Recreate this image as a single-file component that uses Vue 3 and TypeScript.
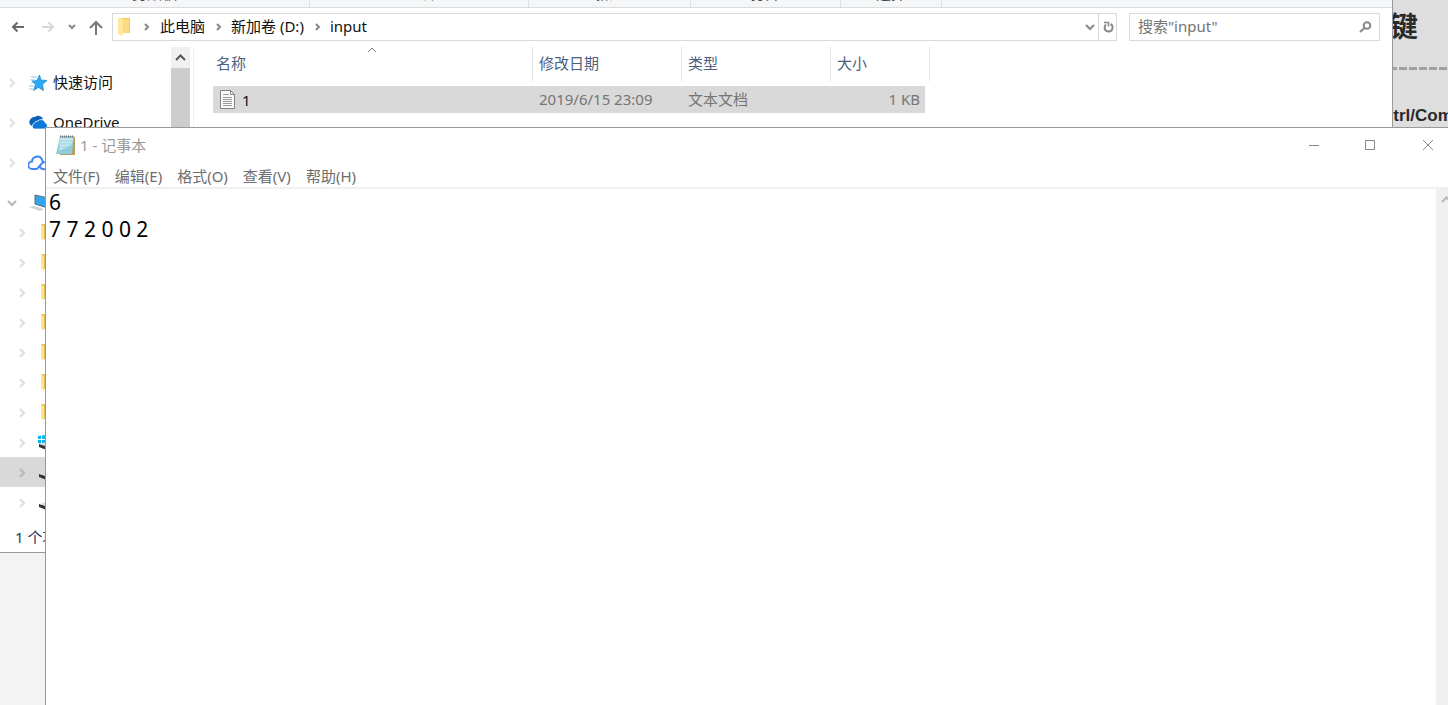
<script setup lang="ts">
interface NavItem {
  label: string
  icon: string
  sub?: boolean
  open?: boolean
  selected?: boolean
}

const groups = ['剪贴板', '组织', '新建', '打开', '选择', '']
const crumbs = ['此电脑', '新加卷 (D:)', 'input']
const nav: NavItem[] = [
  { label: '快速访问', icon: 'star' },
  { label: 'OneDrive', icon: 'onedrive' },
  { label: '', icon: 'cloud' },
  { label: '', icon: 'pc', open: true },
  { label: '', icon: 'folder', sub: true },
  { label: '', icon: 'folder', sub: true },
  { label: '', icon: 'folder', sub: true },
  { label: '', icon: 'folder', sub: true },
  { label: '', icon: 'folder', sub: true },
  { label: '', icon: 'folder', sub: true },
  { label: '', icon: 'folder', sub: true },
  { label: '', icon: 'windows', sub: true },
  { label: '', icon: 'drive', sub: true, selected: true },
  { label: '', icon: 'drive', sub: true },
]
const menus = ['文件(F)', '编辑(E)', '格式(O)', '查看(V)', '帮助(H)']
const content = '6\n7 7 2 0 0 2'
</script>

<template>
  <main class="desktop">
    <aside class="page">
      <h2>键</h2>
      <hr />
      <p>Ctrl/Com</p>
    </aside>

    <section class="explorer">
      <div class="ribbon">
        <div v-for="(g, i) in groups" :key="i" class="group"><span>{{ g }}</span></div>
      </div>

      <div class="toolbar">
        <button class="tool" aria-label="后退">
          <svg width="14" height="12" viewBox="0 0 14 12"><path d="M13 6H2M6.500 1.500L2 6l4.500 4.500" class="s2" stroke="#6a6a6a" /></svg>
        </button>
        <button class="tool forward" aria-label="前进">
          <svg width="14" height="12" viewBox="0 0 14 12"><path d="M1 6h11M7.500 1.500L12 6l-4.500 4.500" class="s2" stroke="#d8d8d8" /></svg>
        </button>
        <button class="tool recent" aria-label="最近浏览的位置">
          <svg width="8" height="6" viewBox="0 0 8 6"><path d="M1 1l3 3 3-3" class="s2" stroke="#888" /></svg>
        </button>
        <button class="tool up" aria-label="上移">
          <svg width="16" height="16" viewBox="0 0 16 16"><path d="M8 15V2M2 8l6-6 6 6" class="s2" stroke="#777" /></svg>
        </button>
        <div class="address">
          <svg class="folder" width="13" height="18" viewBox="0 0 13 18"><path d="M3 0h9v15H3z" fill="#f1c95b" /><path d="M0 0h4l1 2v16l-2-1-3-1z" fill="#ffe79b" /><path d="M5 1h6v14H5z" fill="#fbdc80" /></svg>
          <template v-for="c in crumbs" :key="c">
            <svg class="sep" width="6" height="8" viewBox="0 0 6 8"><path d="M1 1l3 3-3 3" class="s2" stroke="#888" /></svg>
            <button class="crumb">{{ c }}</button>
          </template>
          <button class="drop" aria-label="以前的位置">
            <svg width="10" height="7" viewBox="0 0 10 7"><path d="M1 1l4 4 4-4" class="s2" stroke="#888" /></svg>
          </button>
          <button class="refresh" aria-label="刷新">
            <svg width="11" height="12" viewBox="0 0 11 12"><path d="M3 3.500A4 4 0 1 0 7.500 3" class="s2" stroke="#888" /><path d="M1 1.500h4.500v4" fill="none" stroke="#888" stroke-width="1.500" /></svg>
          </button>
        </div>
        <label class="search">
          <input type="text" placeholder="搜索&quot;input&quot;" aria-label="搜索" />
          <svg width="13" height="12" viewBox="0 0 13 12"><circle cx="8" cy="4.500" r="3.300" class="s2" stroke="#888" /><path d="M5.500 7L1 11" class="s2" stroke="#888" /></svg>
        </label>
      </div>

      <div class="body">
        <nav>
          <ul>
            <li v-for="(n, i) in nav" :key="i" :class="{ sub: n.sub, selected: n.selected }">
              <svg v-if="n.open" class="chev" width="10" height="10" viewBox="0 0 10 10"><path d="M1 3l4 4 4-4" class="s2" stroke="#b5b5b5" /></svg>
              <svg v-else class="chev" width="10" height="10" viewBox="0 0 10 10"><path d="M3 1l4 4-4 4" class="s2" :stroke="n.selected ? '#b8b8b8' : '#dedede'" /></svg>
              <svg class="icon" width="20" height="20" viewBox="0 0 20 20">
                <g v-if="n.icon === 'star'">
                  <path d="M11.500 2l1.500 5 6 .5-4.500 4 1 6-5-3-5 3 2-6L4 8l5-.5z" fill="#2da8f5" stroke="#1683ce" stroke-width=".7" />
                  <path d="M3 4h6M2 7h5M3 10h3M1 13h5M1 16h4" stroke="#8bcaf0" />
                </g>
                <g v-else-if="n.icon === 'onedrive'">
                  <path d="M4 13a4 4 0 0 1-2-6A5 5 0 0 1 7 4a5 5 0 0 1 8 2l-8 7z" fill="#0a62b8" />
                  <path d="M6 16a3 3 0 0 1 0-5.500A4 4 0 0 1 10 8a4 4 0 0 1 7 1.500A3.400 3.400 0 0 1 17 16z" fill="#0a78d8" stroke="#fff" stroke-width=".8" />
                </g>
                <path v-else-if="n.icon === 'cloud'" d="M9 16H4a3.700 3.700 0 0 1 0-7.400A5.300 5.300 0 0 1 14 6.500a4 4 0 0 1 .5 3M9 16l4-4.500a3.500 3.500 0 1 1 2 4.500c-2 0-2-1-3-2" class="s2" stroke="#4285f4" />
                <g v-else-if="n.icon === 'pc'">
                  <path d="M7 2l13 3v10L7 11z" fill="#31a6ee" stroke="#5a6b78" />
                  <path d="M1 14l5-1 10 3-4 2z" fill="#cbd3da" />
                </g>
                <g v-else-if="n.icon === 'folder'">
                  <path d="M3 1h14v15H3z" fill="#e5bb4d" />
                  <path d="M3 1l3 2v15l-1-1-2-1z" fill="#ffe393" />
                </g>
                <g v-else>
                  <path v-if="n.icon === 'windows'" d="M0 3l3-.4V6H0zm4-.5L8 2v4H4zM0 7h3v3.500L0 10zm4 0h4v4l-4-.4z" fill="#00b4f0" />
                  <path d="M1 11l10 3v4L1 14z" fill="#333" />
                  <path d="M2 11l6-2 8 3-5 2z" fill="#ddd" />
                </g>
              </svg>
              <a v-if="n.label" href="#">{{ n.label }}</a>
            </li>
          </ul>
          <div class="scroll"><svg width="11" height="8" viewBox="0 0 11 8"><path d="M1 6l4.500-4.500L10 6" class="s2" stroke="#555" /></svg></div>
        </nav>
        <div class="files">
          <svg class="sort" width="10" height="6" viewBox="0 0 10 6"><path d="M1 5l4-4 4 4" fill="none" stroke="#777" /></svg>
          <table>
            <thead>
              <tr><th class="name">名称</th><th>修改日期</th><th>类型</th><th class="size">大小</th></tr>
            </thead>
            <tbody>
              <tr>
                <td class="name">
                  <svg width="15" height="19" viewBox="0 0 15 19"><path d="M.5.500h10l4 4v14H.5z" fill="#fafafa" stroke="#828282" /><path d="M10.500.500v4h4" fill="none" stroke="#828282" /><path d="M3 4.500h6M3 7.500h9M3 9.500h9M3 11.500h9M3 13.500h9M3 15.500h9" stroke="#9a9a9a" /></svg>
                  <span>1</span>
                </td>
                <td>2019/6/15 23:09</td><td>文本文档</td><td class="size">1 KB</td>
              </tr>
            </tbody>
          </table>
        </div>
      </div>
      <footer>1 个项</footer>
    </section>

    <section class="notepad">
      <header>
        <svg width="20" height="21" viewBox="0 0 20 21"><path d="M4 2h15v18H4z" fill="#b99a5b" /><path d="M4 1h14l-2 18H0z" fill="#8fcddb" /><path d="M4 3h13l-1 7-13 6z" fill="#c3e8ef" /><path d="M4 6h12M4 9h12M3 12h12M3 15h12" stroke="#8fc6d2" stroke-width=".6" /><path d="M4 1.500h14" stroke="#677" stroke-width="2" stroke-dasharray="1 1" /></svg>
        <h1>1 - 记事本</h1>
        <button aria-label="最小化"><svg width="12" height="12" viewBox="0 0 12 12"><path d="M1 6.500h10" stroke="#888" /></svg></button>
        <button aria-label="最大化"><svg width="12" height="12" viewBox="0 0 12 12"><path d="M1.500 1.500h9v9h-9z" fill="none" stroke="#888" /></svg></button>
        <button aria-label="关闭"><svg width="12" height="12" viewBox="0 0 12 12"><path d="M1 1l10 10M11 1L1 11" stroke="#888" /></svg></button>
      </header>
      <div class="menu"><button v-for="m in menus" :key="m">{{ m }}</button></div>
      <div class="editor">
        <textarea aria-label="文本" spellcheck="false" :value="content"></textarea>
        <div class="track"><svg width="11" height="8" viewBox="0 0 11 8"><path d="M1 6l4.500-4.500L10 6" class="s2" stroke="#b8b8b8" /></svg></div>
      </div>
    </section>
  </main>
</template>

<style>
body { margin: 0; }
</style>

<style scoped>
* { box-sizing: border-box; }
.desktop { position: relative; height: 100vh; overflow: hidden; background: #f3f3f3; font: 400 15px/20px "Noto Sans", "Noto Sans CJK SC", sans-serif; color: #111; }
button, input, textarea { font: inherit; color: inherit; border: 0; padding: 0; margin: 0; background: none; }
svg { flex: none; display: block; }
.s2 { fill: none; stroke-width: 2; }
.page { position: absolute; top: 0; right: 0; width: 86px; height: 200px; overflow: hidden; background: #dedede; color: #2a2a2a; white-space: nowrap; }
.page h2 { margin: 0; padding-top: 10px; font-size: 28px; line-height: 32px; width: 56px; display: flex; justify-content: flex-end; }
.page hr { margin: 25px 0 0 17px; border: 0; height: 3px; background: repeating-linear-gradient(90deg, #a0a0a0 0 8px, transparent 8px 10px); }
.page p { margin: 36px 0 0 19px; font: bold 17px/20px "Liberation Sans", sans-serif; }
.explorer { position: absolute; top: 0; left: 0; right: 55px; background: #fff; border-right: 1px solid #999; border-bottom: 1px solid #999; }
.ribbon { display: flex; height: 8px; overflow: hidden; background: #f5f6f7; border-bottom: 1px solid #dadbdc; align-items: flex-end; color: #444; }
.group { display: flex; justify-content: center; align-items: flex-end; height: 20px; border-right: 1px solid #e0e1e2; padding-bottom: 4px; }
.group:nth-child(1) { width: 310px; }
.group:nth-child(2) { width: 219px; }
.group:nth-child(3) { width: 162px; }
.group:nth-child(4) { width: 150px; }
.group:nth-child(5) { width: 101px; }
.group:nth-child(6) { border: 0; }
.toolbar { display: flex; align-items: center; padding: 5px 12px 0 11px; height: 33px; }
.tool { height: 28px; }
.forward { margin-left: 16px; }
.recent { margin-left: 13px; }
.up { margin: 2px 8px 0 12px; }
.address { flex: 1; display: flex; align-items: center; height: 28px; border: 1px solid #d9d9d9; padding-left: 5px; }
.crumb { padding-bottom: 2px; }
.sep { margin: 0 9px 0 11px; }
.folder + .sep { margin: 0 10px 0 13px; }
.drop { margin-left: auto; width: 16px; height: 26px; padding-left: 3px; }
.refresh { width: 18px; height: 26px; border-left: 1px solid #d9d9d9; padding-left: 4px; }
.search { width: 251px; height: 28px; margin-left: 12px; border: 1px solid #d9d9d9; display: flex; align-items: center; padding: 0 7px 0 8px; }
.search input { flex: 1; min-width: 0; height: 26px; padding-bottom: 2px; outline: 0; }
.search input::placeholder { color: #757575; opacity: 1; }
.body { display: flex; padding-top: 6px; }
nav { width: 194px; display: flex; border-right: 1px solid #f2f2f2; }
ul { list-style: none; margin: 0; padding: 20px 0 0; width: 171px; }
li { display: flex; align-items: center; height: 30px; margin-bottom: 10px; padding: 2px 0 0 7px; overflow: hidden; white-space: nowrap; }
li:nth-child(n + 4) { margin-bottom: 0; }
li.sub { padding-left: 17px; }
li.selected { background: #d9d9d9; }
.chev { margin-right: 11px; }
a { color: inherit; text-decoration: none; margin-left: 5px; padding-bottom: 2px; }
.scroll { width: 19px; background: linear-gradient(#f0f0f0 21px, #cdcdcd 21px); padding: 7px 4px; }
.files { flex: 1; padding-left: 18px; position: relative; }
.sort { position: absolute; top: 0; left: 173px; }
table { border-collapse: separate; border-spacing: 0; table-layout: fixed; width: 718px; }
th { height: 34px; padding: 0 0 2px 6px; border-right: 1px solid #e3e3e3; text-align: left; font-weight: inherit; color: #4c607f; width: 149px; }
th.name { width: 321px; padding-left: 4px; }
th.size { width: 99px; }
tbody::before { content: ""; display: block; height: 5px; }
td { height: 27px; padding: 0 0 2px 6px; background: #d9d9d9; color: #757575; }
td.name { margin-left: 1px; padding: 0 0 0 7px; color: #111; display: flex; align-items: center; gap: 7px; }
td.size { text-align: right; padding-right: 5px; border-right: 5px solid #fff; }
footer { height: 35px; padding: 10px 0 0 15px; color: #1e395b; }
.notepad { position: absolute; top: 127px; left: 45px; right: 0; bottom: 0; display: flex; flex-direction: column; background: #fff; border: solid #999; border-width: 1px 0 0 1px; }
header { display: flex; align-items: center; height: 34px; padding-left: 10px; }
h1 { flex: 1; margin: 0 0 0 4px; font-size: 15px; font-weight: inherit; color: #999; }
header button { width: 56px; height: 34px; display: flex; justify-content: center; align-items: center; }
header button:last-child { width: 40px; margin-left: 10px; }
.menu { display: flex; gap: 15px; height: 27px; padding-left: 7px; color: #6d6d6d; border-bottom: 2px solid #f0f0f0; line-height: 28px; }
.editor { flex: 1; display: flex; min-height: 0; }
textarea { flex: 1; resize: none; outline: 0; padding: 0 3px; font-size: 21px; line-height: 27px; color: #000; overflow: hidden; }
.track { width: 12px; background: #f0f0f0; padding: 7px 0 0 5px; overflow: hidden; }
</style>
